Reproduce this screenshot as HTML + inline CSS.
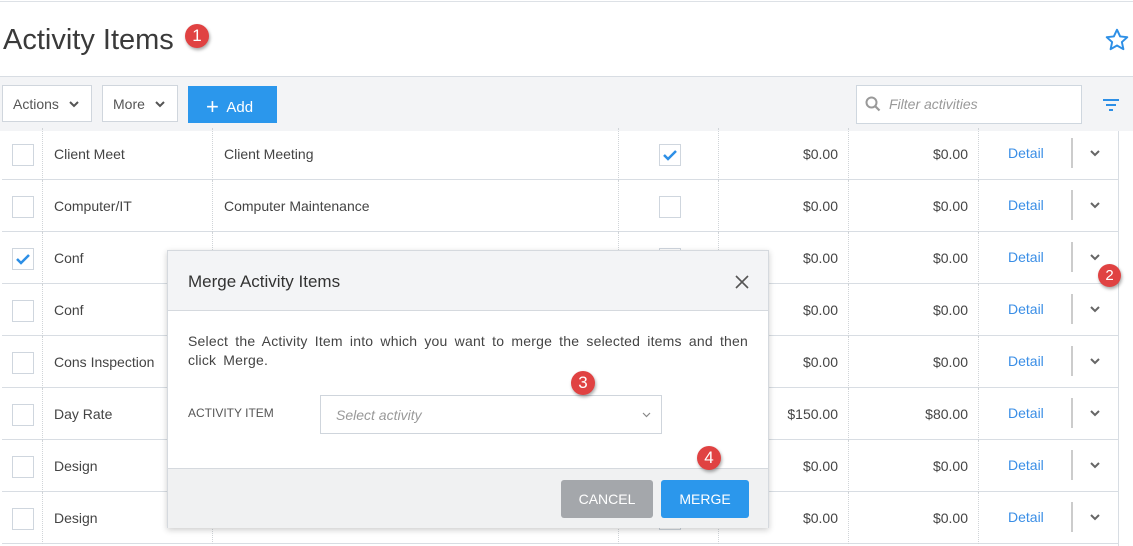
<!DOCTYPE html>
<html><head><style>
*{box-sizing:border-box;margin:0;padding:0}
body{width:1133px;height:546px;overflow:hidden;background:#fff;font-family:"Liberation Sans",sans-serif;color:#444;position:relative;font-size:14px}
.abs{position:absolute}
.badge{position:absolute;width:24px;height:24px;border-radius:50%;background:#e04242;color:#fff;font-size:17px;text-align:center;line-height:24px;box-shadow:1px 2px 3px rgba(0,0,0,.35)}
.row{position:absolute;left:2px;width:1117px;height:52px;border-bottom:1px solid #d8dde3}
.cb{position:absolute;width:22px;height:22px;border:1px solid #cfd6de;background:#fff}
.vl{position:absolute;top:0;height:52px;border-left:1px dotted #d0d4d8}
.t{position:absolute;top:18px;font-size:14px;color:#444}
.r{text-align:right}
.det{position:absolute;top:17px;left:1006px;color:#3a8ee6;font-size:14px}
.sep{position:absolute;left:1069px;top:10px;height:30px;border-left:2px solid #ccc}
.chev{position:absolute;left:1088px;top:22px}
</style></head><body>
<div class="abs" style="left:0;top:1px;width:1133px;height:1px;background:#dde1e6"></div>
<div class="abs" style="left:3px;top:24px;font-size:29px;color:#3a3a3a">Activity Items</div>
<div class="badge" style="left:185px;top:24px">1</div>
<svg class="abs" style="left:1104px;top:27px" width="26" height="26" viewBox="0 0 24 24"><path d="M12 2.5l2.9 6.2 6.6.7-5 4.5 1.4 6.6L12 17.1l-5.9 3.4 1.4-6.6-5-4.5 6.6-.7z" fill="none" stroke="#2d8fe6" stroke-width="1.8" stroke-linejoin="round"/></svg>
<div class="abs" style="left:0;top:76px;width:1133px;height:55px;background:#f3f4f6;border-top:1px solid #d8dde3"></div>
<div class="abs" style="left:2px;top:85px;width:90px;height:37px;border:1px solid #d0d6dd;background:#fff;padding:10px 10px;color:#555">Actions <svg style="margin-left:6px" width="10" height="8"><path d="M1 1l4 4 4-4" fill="none" stroke="#555" stroke-width="2"/></svg></div>
<div class="abs" style="left:102px;top:85px;width:76px;height:37px;border:1px solid #d0d6dd;background:#fff;padding:10px 10px;color:#555">More <svg style="margin-left:6px" width="10" height="8"><path d="M1 1l4 4 4-4" fill="none" stroke="#555" stroke-width="2"/></svg></div>
<div class="abs" style="left:188px;top:86px;width:89px;height:37px;background:#2b97ec;color:#fff;padding:6px 0 0 18px;font-size:15px"><span style="font-size:22px;position:relative;top:2px;font-weight:300">+</span>&nbsp; Add</div>
<div class="abs" style="left:856px;top:85px;width:226px;height:39px;border:1px solid #cfd7df;background:#fff"></div>
<svg class="abs" style="left:865px;top:96px" width="16" height="16" viewBox="0 0 16 16"><circle cx="6.5" cy="6.5" r="5" fill="none" stroke="#999" stroke-width="2"/><path d="M10 10l4.5 4.5" stroke="#999" stroke-width="2.2"/></svg>
<div class="abs" style="left:889px;top:96px;color:#999;font-style:italic">Filter activities</div>
<svg class="abs" style="left:1103px;top:99px" width="16" height="14"><path d="M0 1h16M3 6h10M6 11h4" stroke="#2d8fe6" stroke-width="2"/></svg>

<div id="rows"></div>
<script>
var d=[["Client Meet","Client Meeting",1,0,"$0.00","$0.00"],["Computer/IT","Computer Maintenance",0,0,"$0.00","$0.00"],["Conf","",0,1,"$0.00","$0.00"],["Conf","",0,0,"$0.00","$0.00"],["Cons Inspection","",0,0,"$0.00","$0.00"],["Day Rate","",0,0,"$150.00","$80.00"],["Design","",0,0,"$0.00","$0.00"],["Design","",0,0,"$0.00","$0.00"]];
var h="";
d.forEach(function(r,i){var y=128+i*52;
h+='<div class="row" style="top:'+y+'px">'+
'<div class="vl" style="left:40px"></div><div class="vl" style="left:210px"></div><div class="vl" style="left:616px"></div><div class="vl" style="left:716px"></div><div class="vl" style="left:846px"></div><div class="vl" style="left:976px"></div>'+
'<div class="cb" style="left:10px;top:16px">'+(r[3]?'<svg width="20" height="20"><path d="M4 10l4 4 8-8" fill="none" stroke="#2d8fe6" stroke-width="2.5"/></svg>':'')+'</div>'+
'<div class="t" style="left:52px">'+r[0]+'</div><div class="t" style="left:222px">'+r[1]+'</div>'+
'<div class="cb" style="left:657px;top:16px">'+(r[2]?'<svg width="20" height="20"><path d="M4 10l4 4 8-8" fill="none" stroke="#2d8fe6" stroke-width="2.5"/></svg>':'')+'</div>'+
'<div class="t r" style="left:716px;width:120px">'+r[4]+'</div><div class="t r" style="left:846px;width:120px">'+r[5]+'</div>'+
'<div class="det">Detail</div><div class="sep"></div><svg class="chev" width="10" height="8"><path d="M1 1l4 4 4-4" fill="none" stroke="#666" stroke-width="2"/></svg></div>';});
document.getElementById("rows").innerHTML=h;
</script>
<div class="abs" style="left:1118px;top:131px;width:1px;height:415px;background:#d8dde3"></div>
<div class="badge" style="left:1098px;top:264px;width:23px;height:23px;line-height:23px;font-size:15px">2</div>

<div class="abs" style="left:167px;top:250px;width:602px;height:278px;background:#fff;border:1px solid #d5d9de;box-shadow:0 2px 6px rgba(0,0,0,.2)">
<div style="height:60px;background:#f3f4f6;border-bottom:1px solid #d5d9de;padding:21px 20px;font-size:17px;color:#333">Merge Activity Items</div>
<svg class="abs" style="left:567px;top:24px" width="14" height="14"><path d="M1 1l12 12M13 1L1 13" stroke="#555" stroke-width="1.6"/></svg>
<div class="abs" style="left:20px;top:81px;width:560px;font-size:14px;line-height:19px;color:#444;text-align:justify;letter-spacing:0.2px;word-spacing:3px">Select the Activity Item into which you want to merge the selected items and then click Merge.</div>
<div class="abs" style="left:20px;top:155px;font-size:12px;color:#555">ACTIVITY ITEM</div>
<div class="abs" style="left:152px;top:144px;width:342px;height:39px;border:1px solid #cfd5dc;padding:11px 15px;color:#999;font-style:italic">Select activity</div>
<svg class="abs" style="left:474px;top:161px" width="9" height="6"><path d="M1 1l3.5 3.5L8 1" fill="none" stroke="#888" stroke-width="1.2"/></svg>
<div class="abs" style="left:0;top:217px;width:600px;height:60px;background:#f0f1f2;border-top:1px solid #d5d9de"></div>
<div class="abs" style="left:393px;top:229px;width:92px;height:38px;background:#a4a7ab;border-radius:3px;color:#fff;text-align:center;line-height:38px;font-size:14px">CANCEL</div>
<div class="abs" style="left:493px;top:229px;width:88px;height:38px;background:#2b97ec;border-radius:3px;color:#fff;text-align:center;line-height:38px;font-size:14px">MERGE</div>
</div>
<div class="badge" style="left:571px;top:371px">3</div>
<div class="badge" style="left:697px;top:446px">4</div>
</body></html>
